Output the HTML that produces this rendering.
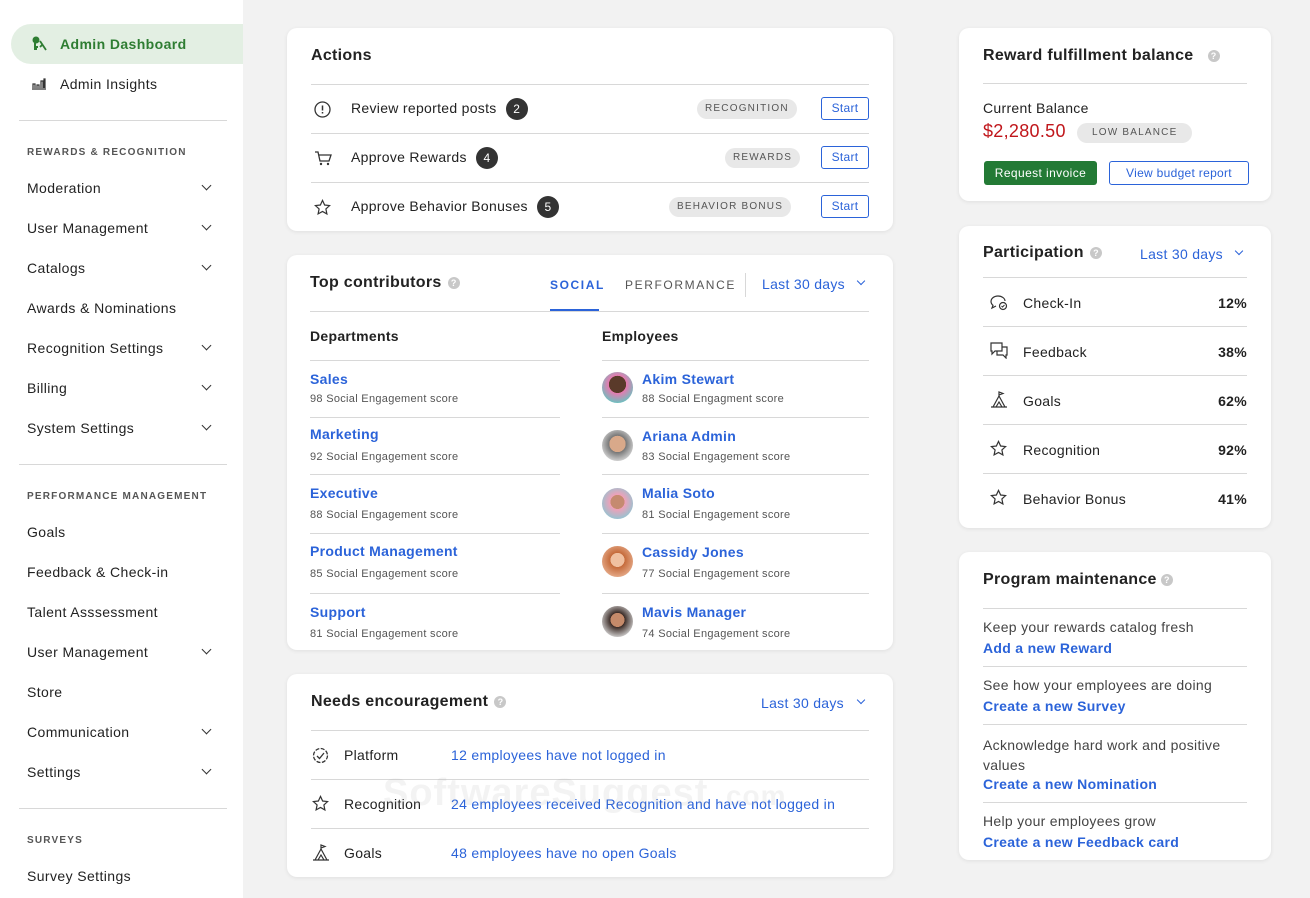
<!DOCTYPE html><html><head><meta charset="utf-8"><style>
*{box-sizing:border-box;margin:0;padding:0}
body{width:1310px;height:898px;overflow:hidden;background:#f2f2f2;font-family:"Liberation Sans",sans-serif;color:#222;font-size:14px;position:relative;letter-spacing:.3px}
.a{position:absolute}
#side{position:absolute;left:0;top:0;width:243px;height:898px;background:#fff}
.si{position:absolute;left:27px;font-size:14px;color:#222;letter-spacing:.4px}
.chev{position:absolute;left:203px;width:7px;height:7px;border-right:1.6px solid #333;border-bottom:1.6px solid #333;transform:rotate(45deg)}
.sec{position:absolute;left:27px;font-size:10px;letter-spacing:1.2px;color:#555;font-weight:bold}
.hr{position:absolute;height:1px;background:#d8d8d8}
.card{position:absolute;background:#fff;border-radius:10px;box-shadow:0 1px 4px rgba(0,0,0,.08)}
.h{position:absolute;font-size:16px;font-weight:bold;color:#222}
.q{display:inline-block;width:12px;height:12px;border-radius:50%;background:#c8c8c8;color:#fff;font-size:9px;text-align:center;line-height:12px;vertical-align:1px;margin-left:6px;letter-spacing:0}
.tag{position:absolute;background:#e8e8e8;border-radius:10px;font-size:10px;letter-spacing:1.2px;color:#555;height:20px;line-height:20px;padding:0 8px}
.btn{position:absolute;border:1px solid #2b63d9;color:#2b63d9;border-radius:3px;font-size:12px;height:23px;line-height:21px;padding:0 8px;letter-spacing:.3px}
.badge{display:inline-block;width:22px;height:22px;border-radius:50%;background:#333;color:#fff;font-size:12px;text-align:center;line-height:22px;margin-left:9px;vertical-align:0;letter-spacing:0}
.blue{color:#2b63d9}
.lnk{position:absolute;color:#2b63d9;font-weight:bold;font-size:14px}
.sm{position:absolute;font-size:11px;color:#555}
.av{position:absolute;width:31px;height:31px;border-radius:50%}
.pc{position:absolute;right:24px;font-weight:bold;font-size:14px}
</style></head><body>
<div id="side">
<div class="a" style="left:11px;top:24px;width:232px;height:40px;background:#e3efe3;border-radius:20px 0 0 20px"></div>
<svg class="a" style="left:31px;top:36px" width="16" height="15" viewBox="0 0 16 15"><circle cx="5" cy="4" r="3.5" fill="#2e7d32"/><path d="M4 7v7M4 11h3M4 13h2" stroke="#2e7d32" stroke-width="2"/><path d="M9 5l6 9M11 9l-2 2" stroke="#2e7d32" stroke-width="1.8"/></svg>
<div class="si" style="left:60px;top:36px;color:#2e7d32;font-weight:bold">Admin Dashboard</div>
<svg class="a" style="left:31px;top:78px" width="16" height="12"><path d="M1 11h14M2 10V6h2v4M6 10V7h2v3M10 10V3h2v7M13 10V1h1v9" stroke="#333" fill="none" stroke-width="1.2"/></svg>
<div class="si" style="left:60px;top:76px">Admin Insights</div>
<div class="hr" style="left:19px;top:120px;width:208px"></div>
<div class="sec" style="top:147px">REWARDS &amp; RECOGNITION</div>
<div class="si" style="top:180px">Moderation</div><div class="chev" style="top:182px"></div>
<div class="si" style="top:220px">User Management</div><div class="chev" style="top:222px"></div>
<div class="si" style="top:260px">Catalogs</div><div class="chev" style="top:262px"></div>
<div class="si" style="top:300px">Awards &amp; Nominations</div>
<div class="si" style="top:340px">Recognition Settings</div><div class="chev" style="top:342px"></div>
<div class="si" style="top:380px">Billing</div><div class="chev" style="top:382px"></div>
<div class="si" style="top:420px">System Settings</div><div class="chev" style="top:422px"></div>
<div class="hr" style="left:19px;top:464px;width:208px"></div>
<div class="sec" style="top:491px">PERFORMANCE MANAGEMENT</div>
<div class="si" style="top:524px">Goals</div>
<div class="si" style="top:564px">Feedback &amp; Check-in</div>
<div class="si" style="top:604px">Talent Asssessment</div>
<div class="si" style="top:644px">User Management</div><div class="chev" style="top:646px"></div>
<div class="si" style="top:684px">Store</div>
<div class="si" style="top:724px">Communication</div><div class="chev" style="top:726px"></div>
<div class="si" style="top:764px">Settings</div><div class="chev" style="top:766px"></div>
<div class="hr" style="left:19px;top:808px;width:208px"></div>
<div class="sec" style="top:835px">SURVEYS</div>
<div class="si" style="top:868px">Survey Settings</div>
</div>

<!-- Actions -->
<div class="card" style="left:287px;top:28px;width:606px;height:203px">
<div class="h" style="left:24px;top:19px">Actions</div>
<div class="hr" style="left:24px;top:56px;width:558px"></div>
<div class="hr" style="left:24px;top:105px;width:558px"></div>
<div class="hr" style="left:24px;top:154px;width:558px"></div>
<svg class="a" style="left:27px;top:73px" width="17" height="17"><circle cx="8.5" cy="8.5" r="7.5" fill="none" stroke="#333" stroke-width="1.3"/><path d="M8.5 4.5v5M8.5 11v1.5" stroke="#333" stroke-width="1.5"/></svg>
<div class="a" style="left:64px;top:70px">Review reported posts<span class="badge">2</span></div>
<div class="tag" style="left:410px;top:71px">RECOGNITION</div><div class="btn" style="left:534px;top:69px;width:48px;text-align:center;padding:0">Start</div>
<svg class="a" style="left:27px;top:122px" width="18" height="16"><path d="M1 2h3l2 9h9l2-6H5" fill="none" stroke="#333" stroke-width="1.3"/><circle cx="7" cy="14" r="1.2" fill="#333"/><circle cx="14" cy="14" r="1.2" fill="#333"/></svg>
<div class="a" style="left:64px;top:119px">Approve Rewards<span class="badge">4</span></div>
<div class="tag" style="left:438px;top:120px">REWARDS</div><div class="btn" style="left:534px;top:118px;width:48px;text-align:center;padding:0">Start</div>
<svg class="a" style="left:27px;top:171px" width="17" height="17" viewBox="0 0 24 24"><path d="M12 2l3 6.5 7 .8-5.2 4.8 1.4 7L12 17.6 5.8 21l1.4-7L2 9.3l7-.8z" fill="none" stroke="#333" stroke-width="1.7"/></svg>
<div class="a" style="left:64px;top:168px">Approve Behavior Bonuses<span class="badge">5</span></div>
<div class="tag" style="left:382px;top:169px">BEHAVIOR BONUS</div><div class="btn" style="left:534px;top:167px;width:48px;text-align:center;padding:0">Start</div>
</div>

<!-- Top contributors -->
<div class="card" style="left:287px;top:255px;width:606px;height:395px">
<div class="h" style="left:23px;top:19px">Top contributors<span class="q">?</span></div>
<div class="a" style="left:263px;top:23px;font-size:12px;letter-spacing:1.6px;font-weight:bold;color:#2b63d9">SOCIAL</div>
<div class="a" style="left:263px;top:54px;width:49px;height:2px;background:#2b63d9"></div>
<div class="a" style="left:338px;top:23px;font-size:12px;letter-spacing:1.6px;color:#555">PERFORMANCE</div>
<div class="a" style="left:458px;top:18px;width:1px;height:24px;background:#d8d8d8"></div>
<div class="a blue" style="left:475px;top:21px">Last 30 days</div><div class="chev" style="left:571px;top:23px;border-color:#2b63d9;width:6px;height:6px"></div>
<div class="hr" style="left:23px;top:56px;width:559px"></div>
<div class="a" style="left:23px;top:73px;font-weight:bold">Departments</div>
<div class="a" style="left:315px;top:73px;font-weight:bold">Employees</div>
<div class="hr" style="left:23px;top:105px;width:250px"></div>
<div class="hr" style="left:315px;top:105px;width:267px"></div>
<div class="lnk" style="left:23px;top:116px">Sales</div><div class="sm" style="left:23px;top:138px">98 Social Engagement score</div>
<div class="hr" style="left:23px;top:162px;width:250px"></div>
<div class="lnk" style="left:23px;top:171px">Marketing</div><div class="sm" style="left:23px;top:196px">92 Social Engagement score</div>
<div class="hr" style="left:23px;top:219px;width:250px"></div>
<div class="lnk" style="left:23px;top:230px">Executive</div><div class="sm" style="left:23px;top:254px">88 Social Engagement score</div>
<div class="hr" style="left:23px;top:278px;width:250px"></div>
<div class="lnk" style="left:23px;top:288px">Product Management</div><div class="sm" style="left:23px;top:313px">85 Social Engagement score</div>
<div class="hr" style="left:23px;top:338px;width:250px"></div>
<div class="lnk" style="left:23px;top:349px">Support</div><div class="sm" style="left:23px;top:373px">81 Social Engagement score</div>

<div class="av" style="left:315px;top:117px;background:radial-gradient(circle at 50% 40%,#5a3a2a 35%,#e77ab0 36%,#63c5c0 80%)"></div>
<div class="lnk" style="left:355px;top:116px">Akim Stewart</div><div class="sm" style="left:355px;top:138px">88 Social Engagment score</div>
<div class="hr" style="left:315px;top:162px;width:267px"></div>
<div class="av" style="left:315px;top:175px;background:radial-gradient(circle at 50% 45%,#d9a98a 35%,#777 36%,#ddd 80%)"></div>
<div class="lnk" style="left:355px;top:173px">Ariana Admin</div><div class="sm" style="left:355px;top:196px">83 Social Engagement score</div>
<div class="hr" style="left:315px;top:219px;width:267px"></div>
<div class="av" style="left:315px;top:233px;background:radial-gradient(circle at 50% 45%,#c58a70 30%,#f0a0b8 31%,#8cc7d4 80%)"></div>
<div class="lnk" style="left:355px;top:230px">Malia Soto</div><div class="sm" style="left:355px;top:254px">81 Social Engagement score</div>
<div class="hr" style="left:315px;top:278px;width:267px"></div>
<div class="av" style="left:315px;top:291px;background:radial-gradient(circle at 50% 45%,#f0c0a0 30%,#c56a3a 31%,#e8b090 80%)"></div>
<div class="lnk" style="left:355px;top:289px">Cassidy Jones</div><div class="sm" style="left:355px;top:313px">77 Social Engagement score</div>
<div class="hr" style="left:315px;top:338px;width:267px"></div>
<div class="av" style="left:315px;top:351px;background:radial-gradient(circle at 50% 45%,#c58a6a 30%,#3a2a25 31%,#ddd 80%)"></div>
<div class="lnk" style="left:355px;top:349px">Mavis Manager</div><div class="sm" style="left:355px;top:373px">74 Social Engagement score</div>
</div>

<!-- Needs encouragement -->
<div class="card" style="left:287px;top:674px;width:606px;height:203px">
<div class="h" style="left:24px;top:19px">Needs encouragement<span class="q">?</span></div>
<div class="a blue" style="left:474px;top:21px">Last 30 days</div><div class="chev" style="left:571px;top:23px;border-color:#2b63d9;width:6px;height:6px"></div>
<div class="hr" style="left:24px;top:56px;width:558px"></div>
<div class="hr" style="left:24px;top:105px;width:558px"></div>
<div class="hr" style="left:24px;top:154px;width:558px"></div>
<svg class="a" style="left:25px;top:73px" width="17" height="17"><circle cx="8.5" cy="8.5" r="7" fill="none" stroke="#333" stroke-width="1.3" stroke-dasharray="4 1.5"/><path d="M5 9l2.5 2.5L12 6" fill="none" stroke="#333" stroke-width="1.3"/></svg>
<div class="a" style="left:57px;top:73px">Platform</div><div class="a blue" style="left:164px;top:73px">12 employees have not logged in</div>
<svg class="a" style="left:25px;top:121px" width="17" height="17" viewBox="0 0 24 24"><path d="M12 2l3 6.5 7 .8-5.2 4.8 1.4 7L12 17.6 5.8 21l1.4-7L2 9.3l7-.8z" fill="none" stroke="#333" stroke-width="1.7"/></svg>
<div class="a" style="left:57px;top:122px">Recognition</div><div class="a blue" style="left:164px;top:122px">24 employees received Recognition and have not logged in</div>
<svg class="a" style="left:25px;top:170px" width="18" height="17"><path d="M1 16h16M3 16l6-11 6 11M6 16l3-5 3 5M9 5V1l4 1.5L9 4" fill="none" stroke="#333" stroke-width="1.2"/></svg>
<div class="a" style="left:57px;top:171px">Goals</div><div class="a blue" style="left:164px;top:171px">48 employees have no open Goals</div>
</div>
<div class="a" style="left:383px;top:772px;font-size:38px;font-weight:bold;color:rgba(160,160,160,.13);letter-spacing:1px">SoftwareSuggest<span style="font-size:28px"> .com</span></div>

<!-- Reward -->
<div class="card" style="left:959px;top:28px;width:312px;height:173px">
<div class="h" style="left:24px;top:19px">Reward fulfillment balance<span class="q" style="margin-left:14px">?</span></div>
<div class="hr" style="left:24px;top:55px;width:264px"></div>
<div class="a" style="left:24px;top:72px">Current Balance</div>
<div class="a" style="left:24px;top:93px;font-size:18px;color:#c0161b">$2,280.50</div>
<div class="tag" style="left:118px;top:95px;border-radius:10px;padding:0 15px">LOW BALANCE</div>
<div class="a" style="left:25px;top:133px;width:113px;height:24px;background:#237a35;border-radius:3px;color:#fff;font-size:12px;text-align:center;line-height:24px;letter-spacing:.4px">Request invoice</div>
<div class="btn" style="left:150px;top:133px;height:24px;width:140px;text-align:center;line-height:22px;padding:0">View budget report</div>
</div>

<!-- Participation -->
<div class="card" style="left:959px;top:226px;width:312px;height:302px">
<div class="h" style="left:24px;top:18px">Participation<span class="q">?</span></div>
<div class="a blue" style="left:181px;top:20px">Last 30 days</div><div class="chev" style="left:277px;top:22px;border-color:#2b63d9;width:6px;height:6px"></div>
<div class="hr" style="left:24px;top:51px;width:264px"></div>
<div class="hr" style="left:24px;top:100px;width:264px"></div>
<div class="hr" style="left:24px;top:149px;width:264px"></div>
<div class="hr" style="left:24px;top:198px;width:264px"></div>
<div class="hr" style="left:24px;top:247px;width:264px"></div>
<svg class="a" style="left:31px;top:68px" width="18" height="17"><path d="M8 2C4 2 1 4.5 1 7.5c0 1.5.8 2.8 2 3.8L2 14l4-2" fill="none" stroke="#333" stroke-width="1.2"/><path d="M8 2c4 0 7 2.5 7 5" fill="none" stroke="#333" stroke-width="1.2"/><circle cx="13" cy="12" r="3.5" fill="none" stroke="#333" stroke-width="1.2"/><path d="M11.5 12l1 1 2-2" fill="none" stroke="#333"/></svg>
<div class="a" style="left:64px;top:69px">Check-In</div><div class="pc" style="top:69px">12%</div>
<svg class="a" style="left:31px;top:116px" width="18" height="17"><path d="M1 1h11v8H5l-3 3V9H1z" fill="none" stroke="#333" stroke-width="1.2"/><path d="M12 5h5v8h-1v3l-3-3H7V9" fill="none" stroke="#333" stroke-width="1.2"/></svg>
<div class="a" style="left:64px;top:118px">Feedback</div><div class="pc" style="top:118px">38%</div>
<svg class="a" style="left:31px;top:165px" width="18" height="17"><path d="M1 16h16M3 16l6-11 6 11M6 16l3-5 3 5M9 5V1l4 1.5L9 4" fill="none" stroke="#333" stroke-width="1.2"/></svg>
<div class="a" style="left:64px;top:167px">Goals</div><div class="pc" style="top:167px">62%</div>
<svg class="a" style="left:31px;top:214px" width="17" height="17" viewBox="0 0 24 24"><path d="M12 2l3 6.5 7 .8-5.2 4.8 1.4 7L12 17.6 5.8 21l1.4-7L2 9.3l7-.8z" fill="none" stroke="#333" stroke-width="1.7"/></svg>
<div class="a" style="left:64px;top:216px">Recognition</div><div class="pc" style="top:216px">92%</div>
<svg class="a" style="left:31px;top:263px" width="17" height="17" viewBox="0 0 24 24"><path d="M12 2l3 6.5 7 .8-5.2 4.8 1.4 7L12 17.6 5.8 21l1.4-7L2 9.3l7-.8z" fill="none" stroke="#333" stroke-width="1.7"/></svg>
<div class="a" style="left:64px;top:265px">Behavior Bonus</div><div class="pc" style="top:265px">41%</div>
</div>

<!-- Program maintenance -->
<div class="card" style="left:959px;top:552px;width:312px;height:308px">
<div class="h" style="left:24px;top:19px">Program maintenance<span class="q" style="margin-left:4px">?</span></div>
<div class="hr" style="left:24px;top:56px;width:264px"></div>
<div class="a" style="left:24px;top:67px;color:#444">Keep your rewards catalog fresh</div>
<div class="lnk" style="left:24px;top:88px">Add a new Reward</div>
<div class="hr" style="left:24px;top:114px;width:264px"></div>
<div class="a" style="left:24px;top:125px;color:#444">See how your employees are doing</div>
<div class="lnk" style="left:24px;top:146px">Create a new Survey</div>
<div class="hr" style="left:24px;top:172px;width:264px"></div>
<div class="a" style="left:24px;top:183px;color:#444;width:270px;line-height:20px">Acknowledge hard work and positive values</div>
<div class="lnk" style="left:24px;top:224px">Create a new Nomination</div>
<div class="hr" style="left:24px;top:250px;width:264px"></div>
<div class="a" style="left:24px;top:261px;color:#444">Help your employees grow</div>
<div class="lnk" style="left:24px;top:282px">Create a new Feedback card</div>
</div>
</body></html>
